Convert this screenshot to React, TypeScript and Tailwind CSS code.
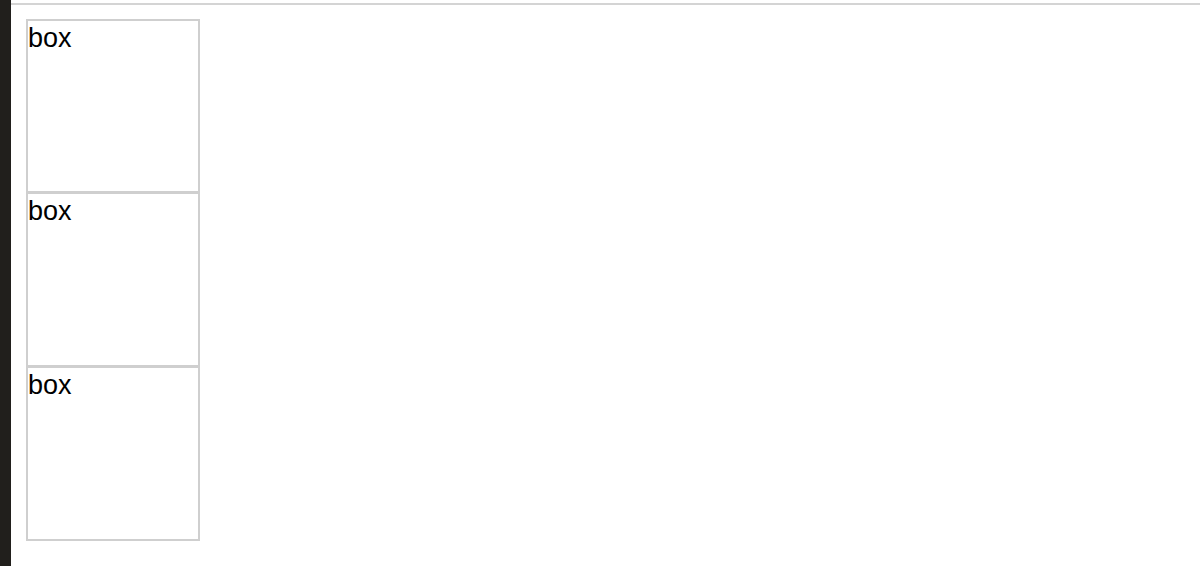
export default function App() {
  const boxes = ["box", "box", "box"];

  return (
    <div className="flex min-h-[566px] bg-white font-['Liberation_Sans',Arial,sans-serif] text-black">
      {/* dark edge on the left */}
      <div className="w-[11px] shrink-0 bg-[#211f1c]" />

      <div className="flex-1">
        <div className="mt-[3px] border-t-2 border-[#d4d4d4]" />
        <div className="pl-[15px] pt-[14px]">
          {boxes.map((label, i) => (
            <div
              key={i}
              className={
                i === 0
                  ? "h-[174px] w-[174px] border-2 border-[#cfcfcf] text-[27px] leading-[34px]"
                  : "h-[174px] w-[174px] border-2 border-t border-[#cfcfcf] text-[27px] leading-[34px]"
              }
            >
              {label}
            </div>
          ))}
        </div>
      </div>
    </div>
  );
}
